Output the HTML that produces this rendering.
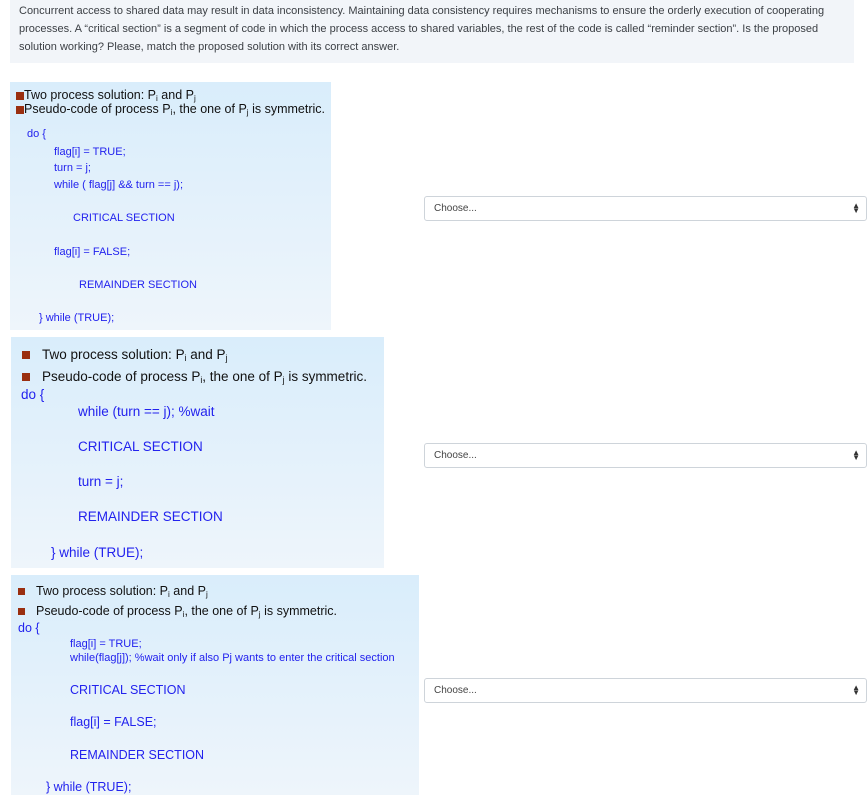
<!DOCTYPE html>
<html><head><meta charset="utf-8"><style>
body{margin:0;width:867px;height:795px;overflow:hidden;background:#fff;font-family:"Liberation Sans",Arial,sans-serif;position:relative}
.hdr{position:absolute;left:10px;top:0;width:844px;height:63px;background:#f2f5f9}
.hdr p{margin:0;position:absolute;left:9px;top:2px;width:830px;font-size:11px;line-height:18px;color:#3b3f44}
.img{position:absolute;background:linear-gradient(#d9edfb,#eef5fb)}
.t{position:absolute;white-space:nowrap;line-height:1}
.k{color:#111}
.b{color:#2222ee}
.sq{display:inline-block;background:#9a2f10;vertical-align:middle}
sub{font-size:65%;vertical-align:-2px;line-height:0}
.sel{position:absolute;left:424px;width:441px;height:23px;border:1px solid #ced4da;border-radius:3px;background:#fff;font-size:10px;color:#444}
.sel span{position:absolute;left:9px;top:6px}
.sel i{position:absolute;right:6px;top:6px;font-style:normal;font-size:8px;line-height:5px;color:#333}
</style></head><body>
<div class="hdr"><p>Concurrent access to shared data may result in data inconsistency. Maintaining data consistency requires mechanisms to ensure the orderly execution of cooperating processes. A “critical section” is a segment of code in which the process access to shared variables, the rest of the code is called “reminder section”. Is the proposed solution working? Please, match the proposed solution with its correct answer.</p></div>

<div class="img" style="left:10px;top:82px;width:321px;height:248px"></div>
<div class="t k" style="left:16px;top:89px;font-size:12.5px"><span class="sq" style="width:8px;height:8px"></span>Two process solution: P<sub>i</sub> and P<sub>j</sub></div>
<div class="t k" style="left:16px;top:103px;font-size:12.5px"><span class="sq" style="width:8px;height:8px"></span>Pseudo-code of process P<sub>i</sub>, the one of P<sub>j</sub> is symmetric.</div>
<div class="t b" style="left:27px;top:129px;font-size:11px">do {</div>
<div class="t b" style="left:54px;top:147px;font-size:11px">flag[i] = TRUE;</div>
<div class="t b" style="left:54px;top:163px;font-size:11px">turn = j;</div>
<div class="t b" style="left:54px;top:180px;font-size:11px">while ( flag[j] &amp;&amp; turn == j);</div>
<div class="t b" style="left:73px;top:213px;font-size:11px">CRITICAL SECTION</div>
<div class="t b" style="left:54px;top:247px;font-size:11px">flag[i] = FALSE;</div>
<div class="t b" style="left:79px;top:280px;font-size:11px">REMAINDER SECTION</div>
<div class="t b" style="left:39px;top:313px;font-size:11px">} while (TRUE);</div>

<div class="img" style="left:11px;top:337px;width:373px;height:231px"></div>
<div class="t k" style="left:22px;top:348px;font-size:13.5px"><span class="sq" style="width:8px;height:8px;margin-right:12px"></span>Two process solution: P<sub>i</sub> and P<sub>j</sub></div>
<div class="t k" style="left:22px;top:370px;font-size:13.5px"><span class="sq" style="width:8px;height:8px;margin-right:12px"></span>Pseudo-code of process P<sub>i</sub>, the one of P<sub>j</sub> is symmetric.</div>
<div class="t b" style="left:21px;top:388px;font-size:13.5px">do {</div>
<div class="t b" style="left:78px;top:405px;font-size:13.5px">while (turn == j); %wait</div>
<div class="t b" style="left:78px;top:440px;font-size:13.5px">CRITICAL SECTION</div>
<div class="t b" style="left:78px;top:475px;font-size:13.5px">turn = j;</div>
<div class="t b" style="left:78px;top:510px;font-size:13.5px">REMAINDER SECTION</div>
<div class="t b" style="left:51px;top:546px;font-size:13.5px">} while (TRUE);</div>

<div class="img" style="left:11px;top:575px;width:408px;height:220px"></div>
<div class="t k" style="left:18px;top:585px;font-size:12.5px"><span class="sq" style="width:7px;height:7px;margin-right:11px"></span>Two process solution: P<sub>i</sub> and P<sub>j</sub></div>
<div class="t k" style="left:18px;top:605px;font-size:12.5px"><span class="sq" style="width:7px;height:7px;margin-right:11px"></span>Pseudo-code of process P<sub>i</sub>, the one of P<sub>j</sub> is symmetric.</div>
<div class="t b" style="left:18px;top:622px;font-size:12.5px">do {</div>
<div class="t b" style="left:70px;top:639px;font-size:11px">flag[i] = TRUE;</div>
<div class="t b" style="left:70px;top:653px;font-size:11px">while(flag[j]); %wait only if also Pj wants to enter the critical section</div>
<div class="t b" style="left:70px;top:684px;font-size:12.5px">CRITICAL SECTION</div>
<div class="t b" style="left:70px;top:716px;font-size:12.5px">flag[i] = FALSE;</div>
<div class="t b" style="left:70px;top:749px;font-size:12.5px">REMAINDER SECTION</div>
<div class="t b" style="left:46px;top:781px;font-size:12.5px">} while (TRUE);</div>

<div class="sel" style="top:196px"><span>Choose...</span><i>▲<br>▼</i></div>
<div class="sel" style="top:443px"><span>Choose...</span><i>▲<br>▼</i></div>
<div class="sel" style="top:678px"><span>Choose...</span><i>▲<br>▼</i></div>
</body></html>
